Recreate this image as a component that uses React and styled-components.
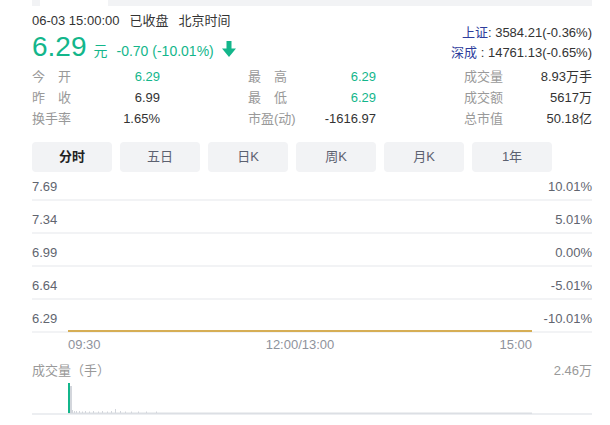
import React from 'react';
import styled, { createGlobalStyle } from 'styled-components';

const GlobalStyle = createGlobalStyle`
  body {
    margin: 0;
    background: #fff;
    font-family: "Liberation Sans", Arial, "Noto Sans CJK SC", sans-serif;
  }
`;

const GREEN = '#13b68b';

const Page = styled.div`
  width: 560px;
  padding: 0 18px 10px 32px;
  font-size: 13px;
  color: #333;
`;

const TopStrip = styled.div`
  display: flex;
  height: 6px;
`;

const StripPart = styled.div`
  background: ${(p) => (p.$active ? '#fff' : '#f2f3f5')};
  width: ${(p) => (p.$w ? `${p.$w}px` : 'auto')};
  flex: ${(p) => (p.$w ? 'none' : 1)};
`;

const Header = styled.div`
  display: flex;
  justify-content: space-between;
`;

const TimeLine = styled.div`
  margin-top: 5px;
  line-height: 20px;
  white-space: nowrap;

  span {
    margin-left: 10px;
  }
`;

const PriceRow = styled.div`
  display: flex;
  align-items: baseline;
  height: 32px;
  line-height: 32px;
  color: ${GREEN};
`;

const BigPrice = styled.span`
  font-size: 28px;
`;

const Unit = styled.span`
  font-size: 14px;
  margin-left: 7px;
`;

const Change = styled.span`
  font-size: 14px;
  margin-left: 9px;
`;

const Arrow = styled.svg`
  margin-left: 8px;
  align-self: center;
  margin-top: 3px;
`;

const IndexList = styled.div`
  margin-top: 17px;
  line-height: 20px;
  text-align: right;
  white-space: nowrap;
`;

const IndexName = styled.span`
  color: #2e3d9c;
`;

const Stats = styled.div`
  margin-top: 3px;
  display: grid;
  grid-template-columns: repeat(3, 128px);
  column-gap: 88px;
`;

const Stat = styled.div`
  display: flex;
  justify-content: space-between;
  line-height: 21px;
  white-space: nowrap;
`;

const StatLabel = styled.span`
  color: #999;
  letter-spacing: ${(p) => (p.$spaced ? '1em' : 'normal')};
`;

const StatValue = styled.span`
  color: ${(p) => (p.$green ? GREEN : '#333')};
`;

const Tabs = styled.div`
  margin-top: 13px;
  display: flex;
  gap: 8px;
`;

const Tab = styled.div`
  width: 80px;
  height: 30px;
  line-height: 30px;
  text-align: center;
  background: #f2f3f5;
  border-radius: 4px;
  font-weight: ${(p) => (p.$active ? 'bold' : 'normal')};
  color: ${(p) => (p.$active ? '#222' : '#5c6170')};
`;

const Chart = styled.div`
  position: relative;
`;

const GridRow = styled.div`
  height: 33px;
  display: flex;
  justify-content: space-between;
  align-items: flex-end;
  padding-bottom: 4px;
  box-sizing: border-box;
  border-bottom: 2px solid #f2f3f5;
  color: #61656f;
  line-height: 16px;

  &:first-child {
    height: 29px;
  }
`;

const PriceLine = styled.svg`
  position: absolute;
  left: 36px;
  bottom: 0;
`;

const TimeAxis = styled.div`
  display: flex;
  justify-content: space-between;
  padding: 0 60px 0 36px;
  line-height: 24px;
  color: #8e929c;
`;

const VolumeHeader = styled.div`
  margin-top: 4px;
  display: flex;
  justify-content: space-between;
  line-height: 20px;
  color: #999;
`;

const VolumeChart = styled.svg`
  display: block;
  margin-top: 2px;
`;

const stats = [
  [
    { label: '今开', value: '6.29', green: true, spaced: true },
    { label: '最高', value: '6.29', green: true, spaced: true },
    { label: '成交量', value: '8.93万手' },
  ],
  [
    { label: '昨收', value: '6.99', spaced: true },
    { label: '最低', value: '6.29', green: true, spaced: true },
    { label: '成交额', value: '5617万' },
  ],
  [
    { label: '换手率', value: '1.65%' },
    { label: '市盈(动)', value: '-1616.97' },
    { label: '总市值', value: '50.18亿' },
  ],
];

const tabs = ['分时', '五日', '日K', '周K', '月K', '1年'];

const grid = [
  ['7.69', '10.01%'],
  ['7.34', '5.01%'],
  ['6.99', '0.00%'],
  ['6.64', '-5.01%'],
  ['6.29', '-10.01%'],
];

// small volume bars after the opening auction bar: [x, height]
const smallBars = [
  [40, 3], [42, 2], [44, 2], [47, 2], [50, 1.5], [53, 2], [57, 1.5], [61, 2],
  [66, 1.5], [70, 2], [75, 1.5], [79, 2], [83, 4], [88, 2], [93, 1.5], [99, 1.5],
  [106, 1.5], [114, 1.5], [124, 1.5],
];

export default function App() {
  return (
    <Page>
      <GlobalStyle />
      <TopStrip>
        <StripPart $w={8} />
        <StripPart $w={68} $active />
        <StripPart />
      </TopStrip>

      <Header>
        <div>
          <TimeLine>
            06-03 15:00:00<span>已收盘</span><span>北京时间</span>
          </TimeLine>
          <PriceRow>
            <BigPrice>6.29</BigPrice>
            <Unit>元</Unit>
            <Change>-0.70 (-10.01%)</Change>
            <Arrow width="14" height="16" viewBox="0 0 14 16">
              <path d="M4.5 0h5v7.5H14L7 16 0 7.5h4.5z" fill={GREEN} />
            </Arrow>
          </PriceRow>
        </div>
        <IndexList>
          <div>
            <IndexName>上证</IndexName>: 3584.21(-0.36%)
          </div>
          <div>
            <IndexName>深成</IndexName> : 14761.13(-0.65%)
          </div>
        </IndexList>
      </Header>

      <Stats>
        {stats.flat().map((s) => (
          <Stat key={s.label}>
            <StatLabel $spaced={s.spaced}>{s.label}</StatLabel>
            <StatValue $green={s.green}>{s.value}</StatValue>
          </Stat>
        ))}
      </Stats>

      <Tabs>
        {tabs.map((t, i) => (
          <Tab key={t} $active={i === 0}>
            {t}
          </Tab>
        ))}
      </Tabs>

      <Chart>
        {grid.map(([price, pct]) => (
          <GridRow key={price}>
            <span>{price}</span>
            <span>{pct}</span>
          </GridRow>
        ))}
        <PriceLine width="464" height="3" viewBox="0 0 464 3">
          <rect x="0" y="0" width="464" height="2" fill="#d6ae55" />
        </PriceLine>
      </Chart>

      <TimeAxis>
        <span>09:30</span>
        <span>12:00/13:00</span>
        <span>15:00</span>
      </TimeAxis>

      <VolumeHeader>
        <span>成交量（手）</span>
        <span>2.46万</span>
      </VolumeHeader>

      <VolumeChart width="560" height="32" viewBox="0 0 560 32">
        <rect x="0" y="30" width="560" height="2" fill="#eceef1" />
        <rect x="36" y="29.5" width="464" height="1.5" fill="#dcdfe4" />
        {smallBars.map(([x, h]) => (
          <rect key={x} x={x} y={30 - h} width="1" height={h} fill="#d3d6dc" />
        ))}
        <rect x="38" y="3" width="2" height="27" fill="#d3d6dc" />
        <rect x="36" y="0" width="2" height="30" fill={GREEN} />
      </VolumeChart>
    </Page>
  );
}
